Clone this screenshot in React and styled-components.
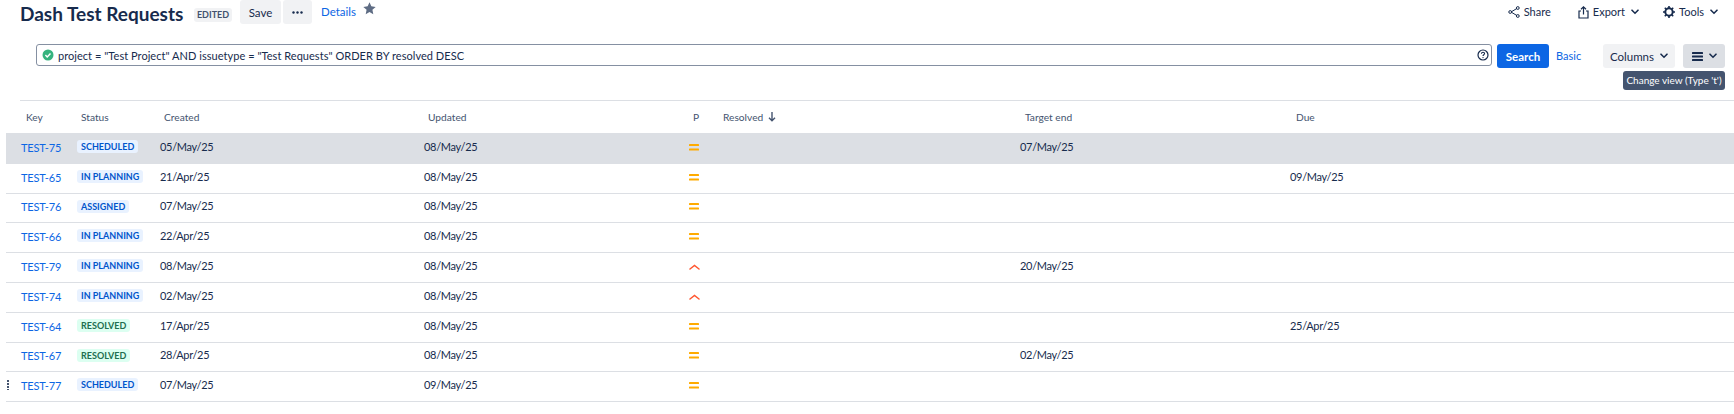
import React from 'react'
import styled, { createGlobalStyle } from 'styled-components'

const GlobalStyle = createGlobalStyle`
  html, body {
    margin: 0;
    background: #fff;
    color: #172b4d;
    font-family: 'Lato', 'Open Sans', sans-serif;
    overflow: hidden;
  }
`;

const Page = styled.div`
  width: 1734px;
  height: 414px;
  overflow: hidden;
`;

const TopBar = styled.div`
  display: flex;
  align-items: flex-start;
  justify-content: space-between;
  height: 44px;
  padding: 0 16px 0 20px;
`;

const TitleGroup = styled.div`
  display: flex;
  align-items: flex-start;
`;

const Title = styled.h1`
  margin: 0;
  font-size: 19px;
  line-height: 27px;
  font-weight: 700;
  color: #172b4d;
  width: 174px;
  white-space: nowrap;
`;

const EditedBadge = styled.span`
  margin: 8px 8px 0 0;
  width: 38px;
  text-align: center;
  height: 14px;
  line-height: 14px;
  font-size: 9px;
  font-weight: 700;
  color: #42526e;
  background: #f1f2f4;
  border-radius: 3px;
`;

const GreyButton = styled.button`
  height: 24px;
  width: ${p => p.$width}px;
  border: 0;
  border-radius: 3px;
  background: #f1f2f4;
  color: #172b4d;
  font: inherit;
  font-size: 11.5px;
  padding: 0;
  margin-right: 2px;
  display: inline-flex;
  align-items: center;
  justify-content: center;
  gap: 6px;
`;

const DetailsLink = styled.a`
  color: #0c66e4;
  font-size: 11.5px;
  line-height: 24px;
  margin: 0 7px 0 7px;
`;

const ToolLinks = styled.div`
  display: flex;
  gap: 24px;
  padding-top: 3px;
`;

const ToolLink = styled.span`
  display: inline-flex;
  align-items: center;
  gap: 4px;
  font-size: 11px;
  line-height: 18px;
  color: #172b4d;
`;

const ShareLink = styled(ToolLink)`
  margin-right: 3px;
`;

const ToolChevron = styled.span`
  display: inline-flex;
  margin-left: 2px;
`;

const SearchRow = styled.div`
  display: flex;
  align-items: flex-start;
  height: 56px;
  padding-left: 36px;
`;

const QueryBox = styled.div`
  width: 1456px;
  height: 22px;
  box-sizing: border-box;
  display: flex;
  align-items: center;
  gap: 4px;
  padding: 0 2px 0 5px;
  border: 1px solid #8590a2;
  border-radius: 3px;
  font-size: 11px;
  letter-spacing: 0.04px;
  color: #172b4d;
`;

const QueryText = styled.span`
  flex: 1;
`;

const SearchButton = styled.button`
  width: 52px;
  height: 24px;
  margin-left: 5px;
  border: 0;
  border-radius: 3px;
  background: #0c66e4;
  color: #fff;
  font: inherit;
  font-size: 11.5px;
  font-weight: 700;
`;

const BasicLink = styled.a`
  color: #0c66e4;
  font-size: 11px;
  line-height: 24px;
  margin-left: 7px;
  width: 47px;
`;

const ViewWrap = styled.div`
  position: relative;
  margin-left: 6px;
`;

const ViewButton = styled(GreyButton)`
  margin: 0;
  background: #dcdfe4;
`;

const Tooltip = styled.div`
  position: absolute;
  top: 27px;
  right: 0;
  width: 102px;
  height: 19px;
  line-height: 19px;
  text-align: center;
  white-space: nowrap;
  background: #44546f;
  color: #fff;
  font-size: 10px;
  border-radius: 3px;
`;

const Table = styled.div`
  margin-left: 6px;
`;

const Row = styled.div`
  display: grid;
  grid-template-columns: 71px 83px 264px 265px 30px 301px 270px 1fr;
  align-items: center;
  position: relative;
  box-sizing: border-box;
  height: ${p => p.$height}px;
  padding-bottom: 5px;
  border-bottom: ${p => (p.$selected ? 0 : '1px solid #dcdfe4')};
  background: ${p => (p.$selected ? '#dcdfe4' : 'transparent')};
`;

const HeaderRow = styled.div`
  display: grid;
  grid-template-columns: 57px 83px 264px 265px 30px 302px 271px 1fr;
  align-items: center;
  box-sizing: border-box;
  height: 33px;
  margin-left: 20px;
  border-top: 1px solid #dcdfe4;
`;

const HeaderCell = styled.div`
  display: flex;
  align-items: center;
  gap: 5px;
  padding-left: ${p => p.$pad ?? 4}px;
  font-size: 10.2px;
  color: #44546f;
`;

const Cell = styled.div`
  font-size: 11px;
  letter-spacing: -0.3px;
  color: #172b4d;
`;

const KeyLink = styled.a`
  color: #0c66e4;
  font-size: 11px;
  letter-spacing: -0.2px;
  padding: 2px 0 0 15px;
`;

const Lozenge = styled.span`
  display: inline-block;
  padding: 0 4px;
  height: 13px;
  line-height: 13px;
  font-size: 9px;
  letter-spacing: 0;
  font-weight: 700;
  border-radius: 3px;
  color: ${p => (p.$done ? '#216e4e' : '#0055cc')};
  background: ${p => (p.$done ? '#dcfff1' : '#e9f2ff')};
`;

const DragHandle = styled.div`
  position: absolute;
  left: 1px;
  top: 8px;
  width: 2px;
  height: 10px;
  background: repeating-linear-gradient(#44546f 0 2px, transparent 2px 3px);
`;

const CheckIcon = () => (
  <svg width="12" height="12" viewBox="0 0 12 12">
    <circle cx="6" cy="6" r="5.5" fill="#36b37e" />
    <path d="M3.4 6.1l1.8 1.8 3.3-3.5" fill="none" stroke="#fff" strokeWidth="1.4" />
  </svg>
);

const HelpIcon = () => (
  <svg width="12" height="12" viewBox="0 0 12 12">
    <circle cx="6" cy="6" r="5" fill="none" stroke="#172b4d" strokeWidth="1.2" />
    <path d="M4.4 4.7C4.5 3.7 5.2 3.3 6 3.3c1 0 1.6.6 1.6 1.3 0 1.2-1.6 1.2-1.6 2.4" fill="none" stroke="#172b4d" strokeWidth="1.1" />
    <circle cx="6" cy="8.6" r=".7" fill="#172b4d" />
  </svg>
);

const Chevron = () => (
  <svg width="8" height="6" viewBox="0 0 8 6">
    <path d="M1 1.2l3 3 3-3" fill="none" stroke="#172b4d" strokeWidth="1.6" strokeLinecap="round" />
  </svg>
);

const DotsIcon = () => (
  <svg width="11" height="3" viewBox="0 0 11 3" fill="#172b4d">
    <circle cx="1.5" cy="1.5" r="1.2" />
    <circle cx="5.5" cy="1.5" r="1.2" />
    <circle cx="9.5" cy="1.5" r="1.2" />
  </svg>
);

const StarIcon = () => (
  <svg width="13" height="13" viewBox="0 0 12 12" style={{ marginTop: 2 }}>
    <path d="M6 .3l1.7 3.7 4 .5-3 2.7.8 4L6 9.2l-3.5 2 .8-4-3-2.7 4-.5z" fill="#5e6c84" />
  </svg>
);

const ShareIcon = () => (
  <svg width="12" height="12" viewBox="0 0 12 12" fill="none" stroke="#172b4d">
    <path d="M9 2.4L3 6l6 3.6" strokeWidth="1" />
    <circle cx="9.8" cy="2" r="1.4" strokeWidth="1" />
    <circle cx="2.2" cy="6" r="1.4" strokeWidth="1" />
    <circle cx="9.8" cy="10" r="1.4" strokeWidth="1" />
  </svg>
);

const ExportIcon = () => (
  <svg width="11" height="13" viewBox="0 0 11 13" fill="none" stroke="#172b4d" strokeWidth="1.2">
    <path d="M3 5H1v7h9V5H8" />
    <path d="M5.5 8.5V1M3 3.2L5.5.9 8 3.2" />
  </svg>
);

const GearIcon = () => (
  <svg width="12" height="12" viewBox="0 0 12 12">
    <circle cx="6" cy="6" r="3.7" fill="none" stroke="#172b4d" strokeWidth="2" />
    <path d="M6 0v2M6 10v2M0 6h2M10 6h2M1.8 1.8l1.4 1.4M8.8 8.8l1.4 1.4M1.8 10.2l1.4-1.4M8.8 3.2l1.4-1.4" stroke="#172b4d" strokeWidth="1.6" />
  </svg>
);

const MenuIcon = () => (
  <svg width="11" height="9" viewBox="0 0 11 9" fill="#172b4d">
    <rect width="11" height="2" rx=".5" />
    <rect y="3.5" width="11" height="2" rx=".5" />
    <rect y="7" width="11" height="2" rx=".5" />
  </svg>
);

const SortArrow = () => (
  <svg width="8" height="10" viewBox="0 0 8 10">
    <path d="M4 0v8.5M1 5.8l3 3 3-3" fill="none" stroke="#44546f" strokeWidth="1.4" />
  </svg>
);

const MediumPriority = () => (
  <svg width="10" height="7" viewBox="0 0 10 7" fill="#ffab00">
    <rect width="10" height="2" rx=".6" />
    <rect y="4.5" width="10" height="2" rx=".6" />
  </svg>
);

const HighPriority = () => (
  <svg width="11" height="6" viewBox="0 0 11 6">
    <path d="M1 5l4.5-3.5L10 5" fill="none" stroke="#ff5630" strokeWidth="1.5" strokeLinecap="round" />
  </svg>
);

const columns = ['Status', 'Created', 'Updated', 'P', 'Resolved', 'Target end', 'Due'];

const issues = [
  { key: 'TEST-75', status: 'SCHEDULED', created: '05/May/25', updated: '08/May/25', p: 'm', target: '07/May/25', height: 31, selected: true },
  { key: 'TEST-65', status: 'IN PLANNING', created: '21/Apr/25', updated: '08/May/25', p: 'm', due: '09/May/25', height: 30 },
  { key: 'TEST-76', status: 'ASSIGNED', created: '07/May/25', updated: '08/May/25', p: 'm', height: 29 },
  { key: 'TEST-66', status: 'IN PLANNING', created: '22/Apr/25', updated: '08/May/25', p: 'm', height: 30 },
  { key: 'TEST-79', status: 'IN PLANNING', created: '08/May/25', updated: '08/May/25', p: 'h', target: '20/May/25', height: 30 },
  { key: 'TEST-74', status: 'IN PLANNING', created: '02/May/25', updated: '08/May/25', p: 'h', height: 30 },
  { key: 'TEST-64', status: 'RESOLVED', created: '17/Apr/25', updated: '08/May/25', p: 'm', due: '25/Apr/25', height: 30 },
  { key: 'TEST-67', status: 'RESOLVED', created: '28/Apr/25', updated: '08/May/25', p: 'm', target: '02/May/25', height: 29 },
  { key: 'TEST-77', status: 'SCHEDULED', created: '07/May/25', updated: '09/May/25', p: 'm', height: 30, drag: true },
];

const App = () => {
  return (
    <Page>
      <GlobalStyle />
      <TopBar>
        <TitleGroup>
          <Title>Dash Test Requests</Title>
          <EditedBadge>EDITED</EditedBadge>
          <GreyButton $width={41}>Save</GreyButton>
          <GreyButton $width={29}><DotsIcon /></GreyButton>
          <DetailsLink>Details</DetailsLink>
          <StarIcon />
        </TitleGroup>
        <ToolLinks>
          <ShareLink><ShareIcon />Share</ShareLink>
          <ToolLink><ExportIcon />Export <ToolChevron><Chevron /></ToolChevron></ToolLink>
          <ToolLink><GearIcon />Tools <ToolChevron><Chevron /></ToolChevron></ToolLink>
        </ToolLinks>
      </TopBar>
      <SearchRow>
        <QueryBox>
          <CheckIcon />
          <QueryText>project = "Test Project" AND issuetype = "Test Requests" ORDER BY resolved DESC</QueryText>
          <HelpIcon />
        </QueryBox>
        <SearchButton>Search</SearchButton>
        <BasicLink>Basic</BasicLink>
        <GreyButton $width={72}>Columns <Chevron /></GreyButton>
        <ViewWrap>
          <ViewButton $width={42}><MenuIcon /><Chevron /></ViewButton>
          <Tooltip>Change view (Type 't')</Tooltip>
        </ViewWrap>
      </SearchRow>
      <HeaderRow>
        <HeaderCell $pad={6}>Key</HeaderCell>
        {columns.map(name => (
          <HeaderCell key={name}>
            {name}
            {name === 'Resolved' && <SortArrow />}
          </HeaderCell>
        ))}
      </HeaderRow>
      <Table>
        {issues.map(issue => (
          <Row key={issue.key} $height={issue.height} $selected={issue.selected}>
            {issue.drag && <DragHandle />}
            <KeyLink>{issue.key}</KeyLink>
            <Cell><Lozenge $done={issue.status === 'RESOLVED'}>{issue.status}</Lozenge></Cell>
            <Cell>{issue.created}</Cell>
            <Cell>{issue.updated}</Cell>
            <Cell>{issue.p === 'm' ? <MediumPriority /> : <HighPriority />}</Cell>
            <Cell />
            <Cell>{issue.target}</Cell>
            <Cell>{issue.due}</Cell>
          </Row>
        ))}
      </Table>
    </Page>
  );
}

export default App;
